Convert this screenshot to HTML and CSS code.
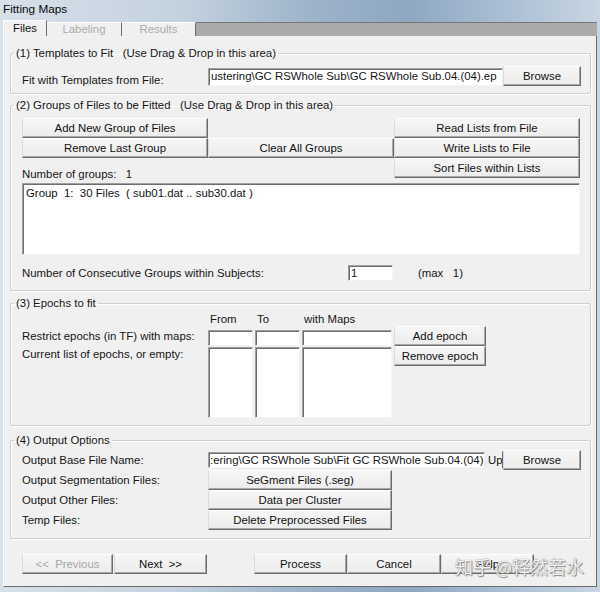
FILE: index.html
```html
<!DOCTYPE html>
<html>
<head>
    <title>Fitting Maps</title>
    <link rel="stylesheet" href="styles.css">
</head>
<body>
    <div class="window">
        <div class="titlebar">Fitting Maps</div>

        <div class="tabs">
            <span class="tab tab-files active">Files</span>
            <span class="tab tab-labeling">Labeling</span>
            <span class="tab tab-results">Results</span>
            <span class="tab-fill"></span>
        </div>

        <div class="page">
            <!-- (1) templates -->
            <fieldset class="group group-templates">
                <legend>(1) Templates to Fit&nbsp;&nbsp;&nbsp;(Use Drag &amp; Drop in this area)</legend>
                <div class="row row-file">
                    <span class="lbl">Fit with Templates from File:</span>
                    <div class="field field-path">ustering\GC RSWhole Sub\GC RSWhole Sub.04.(04).ep</div>
                    <button class="btn btn-browse">Browse</button>
                </div>
            </fieldset>

            <!-- (2) groups -->
            <fieldset class="group group-files">
                <legend>(2) Groups of Files to be Fitted&nbsp;&nbsp;&nbsp;(Use Drag &amp; Drop in this area)</legend>
                <div class="group-buttons">
                    <button class="btn">Add New Group of Files</button>
                    <span></span>
                    <button class="btn">Read Lists from File</button>
                    <button class="btn">Remove Last Group</button>
                    <button class="btn">Clear All Groups</button>
                    <button class="btn">Write Lists to File</button>
                    <span class="count">Number of groups:   1</span>
                    <span></span>
                    <button class="btn">Sort Files within Lists</button>
                </div>
                <div class="listbox">
                    <div class="list-line">Group  1:  30 Files  ( sub01.dat .. sub30.dat )</div>
                </div>
                <div class="row-consecutive">
                    <span class="lbl-wide">Number of Consecutive Groups within Subjects:</span>
                    <div class="field field-small">1</div>
                    <span class="max">(max   1)</span>
                </div>
            </fieldset>

            <!-- (3) epochs -->
            <fieldset class="group group-epochs">
                <legend>(3) Epochs to fit</legend>
                <div class="epoch-grid">
                    <span></span>
                    <span class="col-head">From</span>
                    <span class="col-head">To</span>
                    <span class="col-head">with Maps</span>
                    <span></span>

                    <span class="lbl">Restrict epochs (in TF) with maps:</span>
                    <div class="field field-epoch"></div>
                    <div class="field field-epoch"></div>
                    <div class="field field-epoch"></div>
                    <button class="btn">Add epoch</button>

                    <span class="lbl lbl-top">Current list of epochs, or empty:</span>
                    <div class="field field-list"></div>
                    <div class="field field-list"></div>
                    <div class="field field-list"></div>
                    <div class="epoch-side">
                        <button class="btn">Remove epoch</button>
                    </div>
                </div>
            </fieldset>

            <!-- (4) output -->
            <fieldset class="group group-output">
                <legend>(4) Output Options</legend>
                <div class="row">
                    <span class="lbl">Output Base File Name:</span>
                    <div class="field field-output">:ering\GC RSWhole Sub\Fit GC RSWhole Sub.04.(04)</div>
                    <button class="btn btn-up">Up</button>
                    <button class="btn btn-browse">Browse</button>
                </div>
                <div class="row">
                    <span class="lbl">Output Segmentation Files:</span>
                    <button class="btn btn-option">SeGment Files (.seg)</button>
                </div>
                <div class="row">
                    <span class="lbl">Output Other Files:</span>
                    <button class="btn btn-option">Data per Cluster</button>
                </div>
                <div class="row">
                    <span class="lbl">Temp Files:</span>
                    <button class="btn btn-option">Delete Preprocessed Files</button>
                </div>
            </fieldset>

            <div class="bottom-bar">
                <button class="btn btn-nav disabled">&lt;&lt;&nbsp; Previous</button>
                <button class="btn btn-nav">Next&nbsp; &gt;&gt;</button>
                <button class="btn btn-nav btn-process">Process</button>
                <button class="btn btn-nav btn-cancel">Cancel</button>
                <button class="btn btn-nav">Help</button>
            </div>
        </div>

        <div class="watermark">知乎 @释然若水</div>
    </div>
</body>
</html>
```

FILE: styles.css
```css
body {
    margin: 0;
    font-family: "Liberation Sans", Arial, sans-serif;
    font-size: 11.4px;
    color: #151515;
}

.window {
    position: relative;
    width: 600px;
    height: 592px;
    box-sizing: border-box;
    padding: 0 3px 5px 3px;
    display: flex;
    flex-direction: column;
    background: linear-gradient(90deg, #d6e0e9 0%, #c4d2df 30%, #9db3ca 52%, #8ea7c2 68%, #adc1d6 86%, #c8d5e2 100%);
}

.titlebar {
    height: 20px;
    line-height: 19px;
    font-size: 11.8px;
    color: #0a0a0a;
}

/* tab strip */
.tabs {
    display: flex;
    height: 16px;
}

.tab {
    box-sizing: border-box;
    height: 14px;
    margin-top: 2px;
    line-height: 13px;
    text-align: center;
    background: #f0f0f0;
    border-top: 1px solid #fff;
    border-right: 1px solid #6b6b6b;
    color: #acacac;
}

.tab.active {
    height: 16px;
    margin-top: 0;
    line-height: 15px;
    color: #111;
    border-left: 1px solid #fff;
}

.tab-files { width: 44px; }
.tab-labeling { width: 75px; }
.tab-results { width: 74px; }

.tab-fill {
    flex: 1;
    margin-top: 2px;
    background: #aaaaaa;
    border-top: 1px solid #777;
}

.page {
    flex: 1;
    background: #f0f0f0;
    border-left: 1px solid #fff;
    border-right: 1px solid #6b6b6b;
    border-bottom: 1px solid #6b6b6b;
}

/* group boxes */
.group {
    min-width: 0;
    margin: 0 5px 0 6px;
    padding: 6px 9px 7px 11px;
    border: 1px solid #cdcdcd;
    border-radius: 2px;
    box-shadow: 1px 1px 0 #fff, inset 1px 1px 0 #fff;
}

.group legend {
    margin-left: -8px;
    padding: 0 2px;
    height: 14px;
    line-height: 14px;
}

.group-templates { margin-top: 10px; }
.group-files { margin-top: 4px; padding-bottom: 9px; }
.group-epochs { margin-top: 5px; padding-top: 2px; }
.group-output { margin-top: 7px; padding-top: 3px; padding-bottom: 8px; }

.row {
    display: flex;
    align-items: center;
    height: 20px;
}

.row-file {
    align-items: flex-end;
}

.lbl {
    width: 186px;
    flex-shrink: 0;
}

/* controls */
.btn {
    box-sizing: border-box;
    height: 20px;
    padding: 0;
    font: inherit;
    color: #111;
    background: linear-gradient(#f6f6f6, #ececec);
    border: 1px solid;
    border-color: #fff #6b6b6b #6b6b6b #dcdcdc;
    box-shadow: inset -1px -1px 0 #a8a8a8;
    text-align: center;
    white-space: nowrap;
}

.btn.disabled {
    color: #a6a6a6;
}

.field {
    box-sizing: border-box;
    background: #fff;
    border: 1px solid;
    border-color: #a0a0a0 #f4f4f4 #f4f4f4 #a0a0a0;
    box-shadow: inset 1px 1px 0 #6e6e6e;
    padding: 0 2px;
    line-height: 15px;
    white-space: nowrap;
    overflow: hidden;
}

.field-path {
    width: 295px;
    height: 18px;
}

.btn-browse {
    width: 78px;
}

/* group 2 */
.group-buttons {
    display: grid;
    grid-template-columns: 186px 186px 186px;
    grid-template-rows: 20px 20px 20px;
}

.count {
    align-self: end;
    white-space: pre;
    line-height: 14px;
    margin-bottom: -3px;
}

.listbox {
    box-sizing: border-box;
    width: 558px;
    height: 72px;
    margin-top: 5px;
    background: #fff;
    border: 1px solid;
    border-color: #a0a0a0 #f4f4f4 #f4f4f4 #a0a0a0;
    box-shadow: inset 1px 1px 0 #6e6e6e;
    padding: 2px 3px;
}

.list-line {
    white-space: pre;
    line-height: 14px;
}

.row-consecutive {
    display: flex;
    align-items: center;
    height: 16px;
    margin-top: 10px;
}

.lbl-wide {
    width: 326px;
}

.field-small {
    width: 45px;
    height: 16px;
}

.max {
    margin-left: 25px;
    white-space: pre;
}

/* group 3 */
.epoch-grid {
    display: grid;
    grid-template-columns: 184px 45px 45px 90px 92px;
    grid-template-rows: 14px 20px 72px;
    column-gap: 2px;
}

.col-head {
    padding-left: 2px;
    line-height: 14px;
}

.epoch-grid .lbl {
    width: auto;
    align-self: center;
}

.epoch-grid .lbl-top {
    align-self: start;
    padding-top: 2px;
}

.field-epoch {
    height: 16px;
    align-self: end;
}

.field-list {
    height: 71px;
    margin-top: 1px;
}

.epoch-side .btn {
    width: 92px;
}

/* group 4 */
.field-output {
    width: 277px;
    height: 16px;
    line-height: 14px;
    padding-left: 1px;
}

.btn-up {
    width: 18px;
    height: 18px;
    overflow: hidden;
    text-align: left;
    padding-left: 2px;
    background: #f0f0f0;
    border-color: #f0f0f0 #6b6b6b #f0f0f0 #f0f0f0;
    box-shadow: none;
}

.btn-option {
    width: 184px;
}

/* dialog buttons */
.bottom-bar {
    display: flex;
    margin-top: 15px;
    padding-left: 18px;
}

.btn-nav {
    width: 93px;
    margin-right: 1px;
}

.btn-nav.disabled {
    width: 91px;
}

.btn-process {
    margin-left: 46px;
    margin-right: 0;
}

.btn-cancel {
    width: 94px;
    margin-right: 0;
}

.watermark {
    position: absolute;
    left: 455px;
    top: 555px;
    font-family: "Noto Sans CJK SC", sans-serif;
    font-size: 18px;
    line-height: 22px;
    color: rgba(255, 255, 255, 0.92);
    text-shadow: 0 0 1px #6a6a6a, 1px 1px 1px #8a8a8a;
    white-space: nowrap;
}
```
